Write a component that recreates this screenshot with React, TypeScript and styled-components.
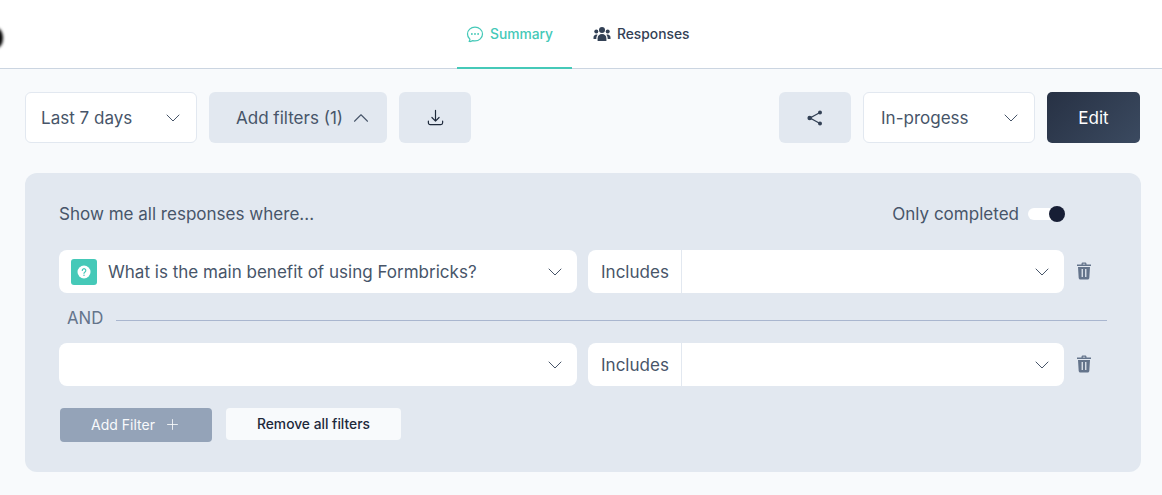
import React from "react";
import styled, { createGlobalStyle } from "styled-components";
import { ChevronDown, ChevronUp, Plus } from "lucide-react";
import {
  HiOutlineChatBubbleOvalLeftEllipsis,
  HiOutlineArrowDownTray,
} from "react-icons/hi2";

const Global = createGlobalStyle`
  html, body { margin: 0; padding: 0; }
  body { background: #f8fafc; font-family: Inter, "Noto Sans", sans-serif; color: #475569; width: 1162px; height: 495px; overflow: hidden; }
  * { box-sizing: border-box; }
`;

const Page = styled.div`
  position: relative;
  width: 1162px;
  height: 495px;
  overflow: hidden;
`;

const Blob = styled.div`
  position: absolute;
  left: -9px;
  top: 28px;
  width: 12px;
  height: 20px;
  border-radius: 50%;
  background: #000;
  filter: blur(1.5px);
`;

const Header = styled.header`
  height: 69px;
  background: #fff;
  border-bottom: 1px solid #cbd5e1;
  display: flex;
  padding-left: 457px;
`;

const Tab = styled.div<{ $active?: boolean; $width: number; $pad: number; $gap: number }>`
  width: ${(p) => p.$width}px;
  height: 69px;
  padding: 1px 0 0 ${(p) => p.$pad}px;
  display: flex;
  align-items: center;
  gap: ${(p) => p.$gap}px;
  font-size: 13.8px;
  font-weight: 500;
  color: ${(p) => (p.$active ? "#45c9b8" : "#334155")};
  border-bottom: 2px solid ${(p) => (p.$active ? "#45c9b8" : "transparent")};
`;

const Toolbar = styled.div`
  display: flex;
  align-items: center;
  justify-content: space-between;
  padding: 23px 22px 0 25px;
`;

const Group = styled.div`
  display: flex;
  gap: 12px;
`;

const Select = styled.div<{ $width: number; $pad: number }>`
  width: ${(p) => p.$width}px;
  height: 51px;
  background: #fff;
  border: 1px solid #e2e8f0;
  border-radius: 6px;
  display: flex;
  align-items: center;
  justify-content: space-between;
  padding: 0 11px 0 ${(p) => p.$pad}px;
  font-size: 17.05px;
  color: #475569;
`;

const SoftButton = styled.div<{ $width: number; $shift?: number }>`
  width: ${(p) => p.$width}px;
  height: 51px;
  background: #e2e8f0;
  border-radius: 6px;
  display: flex;
  align-items: center;
  justify-content: center;
  padding-left: ${(p) => p.$shift ?? 0}px;
  gap: 5px;
  font-size: 17.05px;
  color: #475569;
`;

const EditButton = styled.div`
  width: 93px;
  height: 51px;
  border-radius: 5px;
  background: linear-gradient(135deg, #273144, #3b4a60);
  color: #fff;
  display: flex;
  align-items: center;
  justify-content: center;
  font-size: 17.05px;
  font-weight: 400;
`;

const Panel = styled.section`
  width: 1116px;
  height: 299px;
  margin: 30px 0 0 25px;
  padding: 28px 34px 0;
  background: #e2e8f0;
  border-radius: 12px;
`;

const TitleRow = styled.div`
  display: flex;
  align-items: center;
  justify-content: space-between;
  height: 25px;
  margin-bottom: 24px;
  padding-right: 42px;
  font-size: 17.05px;
  color: #475569;
`;

const Completed = styled.div`
  display: flex;
  align-items: center;
  gap: 9px;
`;

const Toggle = styled.div`
  position: relative;
  width: 30px;
  height: 12px;
  border-radius: 6px;
  background: #fff;
  margin-right: 7px;
`;

const Knob = styled.span`
  position: absolute;
  right: -7px;
  top: -2px;
  width: 16px;
  height: 16px;
  border-radius: 50%;
  background: #171e35;
`;

const FilterRow = styled.div`
  display: flex;
  align-items: center;
  height: 43px;
`;

const Combo = styled.div`
  width: 518px;
  height: 43px;
  background: #fff;
  border-radius: 8px;
  display: flex;
  align-items: center;
  padding: 0 10px 0 12px;
  gap: 11px;
  font-size: 17.05px;
  color: #475569;
`;

const ComboText = styled.span`
  flex: 1;
`;

const Tile = styled.span`
  width: 26px;
  height: 26px;
  border-radius: 3px;
  background: #45c9b8;
  display: flex;
  align-items: center;
  justify-content: center;
`;

const Condition = styled.div`
  width: 476px;
  height: 43px;
  margin-left: 11px;
  background: #fff;
  border-radius: 8px;
  display: flex;
  align-items: center;
  font-size: 17.05px;
  color: #475569;
`;

const Operator = styled.div`
  width: 94px;
  height: 100%;
  border-right: 1px solid #e2e8f0;
  display: flex;
  align-items: center;
  padding-left: 13px;
`;

const ConditionValue = styled.div`
  flex: 1;
  display: flex;
  justify-content: flex-end;
  padding-right: 10px;
`;

const TrashSlot = styled.div`
  width: 40px;
  display: flex;
  justify-content: center;
  padding-bottom: 1px;
  color: #64748b;
`;

const AndRow = styled.div`
  height: 50px;
  display: flex;
  align-items: center;
  gap: 13px;
  padding-left: 8px;
  font-size: 16.8px;
  color: #64748b;
`;

const AndLine = styled.div`
  width: 991px;
  height: 1px;
  margin-top: 5px;
  background: #a9b6cf;
`;

const Footer = styled.div`
  display: flex;
  align-items: flex-start;
  gap: 14px;
  margin-top: 22px;
  padding-left: 1px;
`;

const AddFilter = styled.div`
  width: 152px;
  height: 34px;
  padding-bottom: 1px;
  border-radius: 4px;
  background: #94a3b8;
  color: #f8fafc;
  display: flex;
  align-items: center;
  justify-content: center;
  gap: 9px;
  font-size: 14px;
`;

const RemoveAll = styled.div`
  width: 175px;
  height: 32px;
  border-radius: 4px;
  background: #f8fafc;
  color: #1e293b;
  display: flex;
  align-items: center;
  justify-content: center;
  font-size: 13.8px;
  font-weight: 500;
`;

const Chevron = () => <ChevronDown size={24} strokeWidth={1} color="#475569" />;

const QuestionIcon = () => (
  <svg width="16" height="16" viewBox="0 0 16 16" aria-hidden="true">
    <circle cx="8" cy="8" r="6.5" fill="#fff" />
    <path d="M6.3 6.4a1.75 1.75 0 1 1 2.7 1.5c-.6.4-1 .7-1 1.4" fill="none" stroke="#45c9b8" strokeWidth="1.2" strokeLinecap="round" />
    <circle cx="8" cy="11.2" r=".75" fill="#45c9b8" />
  </svg>
);

const GroupIcon = () => (
  <svg width="18" height="16" viewBox="0 0 18 16" fill="#334155" aria-hidden="true">
    <circle cx="9" cy="4" r="3" />
    <circle cx="3.3" cy="5.6" r="2" />
    <circle cx="14.7" cy="5.6" r="2" />
    <path d="M4.6 15v-2.6C4.6 9.8 6.4 8 9 8s4.4 1.800 4.400 4.400V15z" />
    <path d="M3.500 8.500C1.700 8.500.5 9.900.5 11.500V13h2.800c0-1.800.3-3.200 1.300-4.300-.3-.1-.7-.2-1.100-.2z" />
    <path d="M14.500 8.500c1.800 0 3 1.400 3 3V13h-2.800c0-1.800-.3-3.200-1.300-4.300.3-.1.700-.2 1.100-.2z" />
  </svg>
);

const ShareIcon = () => (
  <svg width="18" height="18" viewBox="0 0 18 18" fill="#334155" stroke="#334155" aria-hidden="true">
    <path d="M14 3.500 4 9l10 5.500" fill="none" strokeWidth="1.300" />
    <circle cx="14" cy="3.500" r="2" stroke="none" />
    <circle cx="3.700" cy="9" r="2.300" stroke="none" />
    <circle cx="14" cy="14.500" r="2" stroke="none" />
  </svg>
);

const TrashIcon = () => (
  <svg width="16" height="18" viewBox="0 0 16 18" fill="#64748b" aria-hidden="true">
    <path fillRule="evenodd" d="M5.500 1.800C5.600 1 6.200.5 7 .5h2c.8 0 1.400.5 1.500 1.300V2.500H15V4H1V2.500h4.500zM6.800 2.500h2.400v-.4c0-.2-.1-.3-.3-.3H7.100c-.2 0-.3.1-.3.300z" />
    <path fillRule="evenodd" d="M2 5h12l-.7 11c-.1.900-.8 1.500-1.600 1.500H4.300c-.8 0-1.500-.6-1.600-1.500zM5.600 7v8h1.300V7zm3.500 0v8h1.300V7z" />
  </svg>
);

const Trash = () => (
  <TrashSlot>
    <TrashIcon />
  </TrashSlot>
);

export default function App() {
  return (
    <Page>
      <Global />
      <Blob />
      <Header>
        <Tab $active $width={115} $pad={8} $gap={5}>
          <HiOutlineChatBubbleOvalLeftEllipsis size={20} />
          Summary
        </Tab>
        <Tab $width={135} $pad={21} $gap={6}>
          <GroupIcon />
          Responses
        </Tab>
      </Header>
      <Toolbar>
        <Group>
          <Select $width={172} $pad={15}>
            Last 7 days
            <Chevron />
          </Select>
          <SoftButton $width={178} $shift={14}>
            Add filters (1)
            <ChevronUp size={26} strokeWidth={1} color="#475569" />
          </SoftButton>
          <SoftButton $width={72}>
            <HiOutlineArrowDownTray size={19} color="#1e293b" />
          </SoftButton>
        </Group>
        <Group>
          <SoftButton $width={72}>
            <ShareIcon />
          </SoftButton>
          <Select $width={172} $pad={17}>
            In-progess
            <Chevron />
          </Select>
          <EditButton>Edit</EditButton>
        </Group>
      </Toolbar>
      <Panel>
        <TitleRow>
          <span>Show me all responses where...</span>
          <Completed>
            Only completed
            <Toggle>
              <Knob />
            </Toggle>
          </Completed>
        </TitleRow>
        <FilterRow>
          <Combo>
            <Tile>
              <QuestionIcon />
            </Tile>
            <ComboText>What is the main benefit of using Formbricks?</ComboText>
            <Chevron />
          </Combo>
          <Condition>
            <Operator>Includes</Operator>
            <ConditionValue>
              <Chevron />
            </ConditionValue>
          </Condition>
          <Trash />
        </FilterRow>
        <AndRow>
          AND
          <AndLine />
        </AndRow>
        <FilterRow>
          <Combo>
            <ComboText />
            <Chevron />
          </Combo>
          <Condition>
            <Operator>Includes</Operator>
            <ConditionValue>
              <Chevron />
            </ConditionValue>
          </Condition>
          <Trash />
        </FilterRow>
        <Footer>
          <AddFilter>
            Add Filter
            <Plus size={17} strokeWidth={1.2} />
          </AddFilter>
          <RemoveAll>Remove all filters</RemoveAll>
        </Footer>
      </Panel>
    </Page>
  );
}
